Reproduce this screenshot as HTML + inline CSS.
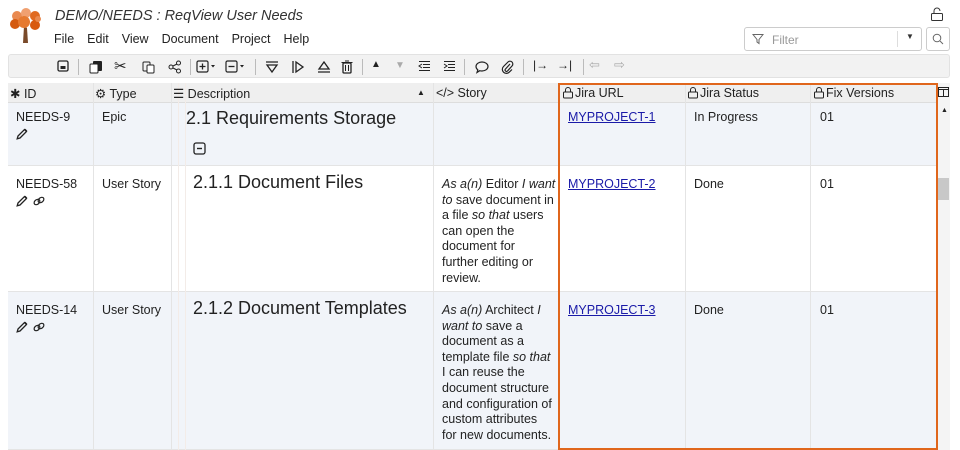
<!DOCTYPE html>
<html><head><meta charset="utf-8"><style>
*{box-sizing:border-box;margin:0;padding:0}
body{width:960px;height:450px;overflow:hidden;background:#fff;font-family:"Liberation Sans",sans-serif;color:#222;position:relative;font-size:12px}
.a{position:absolute}
.menu span{margin-right:13px}
.tb{left:8px;top:54px;width:942px;height:24px;background:#f2f2f2;border:1px solid #e2e2e2;border-radius:3px}
.ic{position:absolute;top:5px}
.sep{position:absolute;top:4px;width:1px;height:16px;background:#bbb}
.hdr{left:8px;top:83px;width:942px;height:20px;background:#efefef;border-bottom:1px solid #ddd}
.hc{position:absolute;top:86px;font-size:12.5px;color:#222}
.row{position:absolute;left:8px;width:929px;border-bottom:1px solid #e4e4e4}
.vl{position:absolute;top:83px;width:1px;height:367px;background:#e4e4e4}
.t{position:absolute;font-size:12.5px;line-height:15.6px}
.h{position:absolute;font-size:18px;color:#222}
a{color:#1a1aa8;text-decoration:underline}
i{font-style:italic}
</style></head><body>
<svg width="0" height="0" style="position:absolute"><defs>
<symbol id="pen" viewBox="0 0 12 12"><path d="M8.5 1.5l2 2L4 10l-2.8.8L2 8Z" fill="none" stroke="#222" stroke-width="1.3"/><path d="M8.5 1.5l2 2 .8-.8-2-2Z" fill="#222"/></symbol>
<symbol id="lnk" viewBox="0 0 14 12"><ellipse cx="5" cy="7" rx="3.2" ry="2.3" transform="rotate(-40 5 7)" fill="none" stroke="#222" stroke-width="1.2"/><ellipse cx="9" cy="5" rx="3.2" ry="2.3" transform="rotate(-40 9 5)" fill="none" stroke="#222" stroke-width="1.2"/></symbol>
</defs></svg>
<svg class="a" style="left:8px;top:6px" width="36" height="38" viewBox="0 0 36 38">
<path d="M16 20 L15 37 L20 37 L19 22 Z" fill="#7a4a2a"/>
<circle cx="9" cy="10" r="5" fill="#e98a50"/><circle cx="18" cy="7" r="5" fill="#f0a070"/><circle cx="27" cy="10" r="5" fill="#e06a20"/>
<circle cx="7" cy="18" r="5" fill="#d45a10"/><circle cx="16" cy="16" r="6" fill="#e67a30"/><circle cx="27" cy="19" r="5" fill="#d85a10"/><circle cx="30" cy="13" r="3" fill="#e98a50"/>
</svg>
<div class="a" style="left:55px;top:8px;font-size:14.5px;font-style:italic;color:#333">DEMO/NEEDS : ReqView User Needs</div>
<div class="a menu" style="left:54px;top:32px;font-size:12.5px"><span>File</span><span>Edit</span><span>View</span><span>Document</span><span>Project</span><span>Help</span></div>
<svg class="a" style="left:929px;top:6px" width="16" height="16" viewBox="0 0 16 16"><rect x="2.5" y="7.5" width="11" height="7" rx="1" fill="none" stroke="#333"/><path d="M5 7.5V5a3 3 0 0 1 6 0" fill="none" stroke="#333"/></svg>
<div class="a" style="left:744px;top:27px;width:178px;height:24px;border:1px solid #ccc;border-radius:3px"></div>
<svg class="a" style="left:752px;top:33px" width="12" height="12" viewBox="0 0 12 12"><path d="M1 1.5h10L7 6.5v4L5 9V6.5Z" fill="none" stroke="#666"/></svg>
<div class="a" style="left:772px;top:33px;color:#999;font-size:12px">Filter</div>
<div class="a" style="left:897px;top:31px;width:1px;height:16px;background:#ddd"></div>
<div class="a" style="left:906px;top:32px;font-size:8px;color:#333">▼</div>
<div class="a" style="left:926px;top:27px;width:24px;height:24px;border:1px solid #ccc;border-radius:3px"></div>
<svg class="a" style="left:932px;top:33px" width="12" height="12" viewBox="0 0 12 12"><circle cx="5" cy="5" r="3.8" fill="none" stroke="#666"/><path d="M8 8l3 3" stroke="#666"/></svg>
<div class="a tb">
<svg class="ic" style="left:48px" width="12" height="12" viewBox="0 0 12 12"><rect x="1" y="1" width="10" height="10" rx="1.5" fill="none" stroke="#222" stroke-width="1.3"/><rect x="3.5" y="6" width="5" height="3" fill="#222"/></svg>
<div class="sep" style="left:69px"></div>
<svg class="ic" style="left:80px" width="14" height="14" viewBox="0 0 14 14"><rect x="4" y="1" width="9" height="10" rx="1" fill="#222"/><rect x="1" y="4" width="8" height="9" rx="1" fill="#fff" stroke="#222"/></svg>
<div class="ic" style="left:105px;top:2px;font-size:15px">✂</div>
<svg class="ic" style="left:133px" width="13" height="14" viewBox="0 0 13 14"><rect x="1" y="2" width="7" height="9" rx="1" fill="none" stroke="#222"/><rect x="5" y="5" width="7" height="8" rx="1" fill="#fff" stroke="#222"/></svg>
<svg class="ic" style="left:159px" width="14" height="14" viewBox="0 0 14 14"><circle cx="3" cy="7" r="2" fill="none" stroke="#222"/><circle cx="10.5" cy="3" r="2" fill="none" stroke="#222"/><circle cx="10.5" cy="11" r="2" fill="none" stroke="#222"/><path d="M5 6l4-2M5 8l4 2" stroke="#222"/></svg>
<div class="sep" style="left:181px"></div>
<svg class="ic" style="left:187px" width="22" height="13" viewBox="0 0 22 13"><rect x="1" y="1" width="11" height="11" rx="1.5" fill="none" stroke="#222" stroke-width="1.2"/><path d="M6.5 3.5v6M3.5 6.5h6" stroke="#222" stroke-width="1.3"/><path d="M15 5h4l-2 2.5z" fill="#222"/></svg>
<svg class="ic" style="left:216px" width="22" height="13" viewBox="0 0 22 13"><rect x="1" y="1" width="11" height="11" rx="1.5" fill="none" stroke="#222" stroke-width="1.2"/><path d="M3.5 6.5h6" stroke="#222" stroke-width="1.3"/><path d="M15 5h4l-2 2.5z" fill="#222"/></svg>
<div class="sep" style="left:246px"></div>
<svg class="ic" style="left:256px" width="14" height="14" viewBox="0 0 14 14"><path d="M1 2h12M2 5h10L7 12Z" fill="none" stroke="#222" stroke-width="1.3"/></svg>
<svg class="ic" style="left:282px" width="14" height="14" viewBox="0 0 14 14"><path d="M2 1v12M5 2v10l7-5Z" fill="none" stroke="#222" stroke-width="1.3"/></svg>
<svg class="ic" style="left:308px" width="14" height="14" viewBox="0 0 14 14"><path d="M2 9h10L7 2Z M1 12h12" fill="none" stroke="#222" stroke-width="1.3"/></svg>
<svg class="ic" style="left:331px" width="14" height="14" viewBox="0 0 14 14"><rect x="3" y="3" width="8" height="10" rx="1" fill="none" stroke="#222" stroke-width="1.3"/><path d="M1.5 2.5h11M5 1h4M5.5 5v6M8.5 5v6" stroke="#222"/></svg>
<div class="sep" style="left:353px"></div>
<div class="ic" style="left:362px;top:4px;font-size:10px">▲</div>
<div class="ic" style="left:386px;top:5px;font-size:10px;color:#aaa">▼</div>
<svg class="ic" style="left:409px" width="13" height="13" viewBox="0 0 13 13"><path d="M1 1.5h11M5 4.5h7M5 7.5h7M1 10.5h11M4 4l-3 2 3 2" fill="none" stroke="#222"/></svg>
<svg class="ic" style="left:434px" width="13" height="13" viewBox="0 0 13 13"><path d="M1 1.5h11M5 4.5h7M5 7.5h7M1 10.5h11M1 4l3 2-3 2" fill="none" stroke="#222"/></svg>
<div class="sep" style="left:455px"></div>
<svg class="ic" style="left:466px" width="14" height="14" viewBox="0 0 14 14"><path d="M7 2c3.3 0 6 2 6 4.5S10.3 11 7 11c-.8 0-1.6-.1-2.3-.3L2 12.5l.8-2.6C1.7 9 1 7.8 1 6.5 1 4 3.7 2 7 2Z" fill="none" stroke="#222" stroke-width="1.2"/></svg>
<svg class="ic" style="left:492px" width="13" height="14" viewBox="0 0 13 14"><path d="M9 4L4.5 9a1.4 1.4 0 0 0 2 2L11 6a2.8 2.8 0 0 0-4-4L2.5 6.5a4 4 0 0 0 5.7 5.7L11 9.5" fill="none" stroke="#222" stroke-width="1.2"/></svg>
<div class="sep" style="left:514px"></div>
<div class="ic" style="left:524px;top:3px;font-size:12px">|→</div>
<div class="ic" style="left:548px;top:3px;font-size:12px">→|</div>
<div class="sep" style="left:574px"></div>
<div class="ic" style="left:580px;top:2px;font-size:13px;color:#aaa">⇦</div>
<div class="ic" style="left:605px;top:2px;font-size:13px;color:#aaa">⇨</div>
</div>
<div class="a" style="left:8px;top:83px;width:1px;height:367px;background:#ccc"></div>
<div class="a hdr"></div>
<div class="row" style="top:103px;height:63px;background:#f1f4f9"></div>
<div class="row" style="top:166px;height:126px;background:#fff"></div>
<div class="row" style="top:292px;height:158px;background:#f1f4f9"></div>
<div class="vl" style="left:93px"></div><div class="vl" style="left:171px"></div>
<div class="vl" style="left:178px;background:#f3ece8"></div><div class="vl" style="left:185px;background:#f3ece8"></div>
<div class="vl" style="left:433px"></div><div class="vl" style="left:685px"></div><div class="vl" style="left:810px"></div>
<div class="hc" style="left:10px">✱ ID</div>
<div class="hc" style="left:95px">⚙ Type</div>
<div class="hc" style="left:173px">☰ Description</div>
<div class="hc" style="left:417px;font-size:8px;top:88px">▲</div>
<div class="hc" style="left:436px">&lt;/&gt; Story</div>
<svg class="a" style="left:562px;top:86px" width="12" height="13" viewBox="0 0 12 13"><rect x="1.5" y="6" width="9" height="6" rx="1" fill="none" stroke="#222"/><path d="M3.5 6V4a2.5 2.5 0 0 1 5 0v2" fill="none" stroke="#222"/></svg>
<div class="hc" style="left:575px">Jira URL</div>
<svg class="a" style="left:687px;top:86px" width="12" height="13" viewBox="0 0 12 13"><rect x="1.5" y="6" width="9" height="6" rx="1" fill="none" stroke="#222"/><path d="M3.5 6V4a2.5 2.5 0 0 1 5 0v2" fill="none" stroke="#222"/></svg>
<div class="hc" style="left:700px">Jira Status</div>
<svg class="a" style="left:813px;top:86px" width="12" height="13" viewBox="0 0 12 13"><rect x="1.5" y="6" width="9" height="6" rx="1" fill="none" stroke="#222"/><path d="M3.5 6V4a2.5 2.5 0 0 1 5 0v2" fill="none" stroke="#222"/></svg>
<div class="hc" style="left:826px">Fix Versions</div>
<div class="a" style="left:937px;top:83px;width:13px;height:367px;background:#f4f4f4;border-left:1px solid #ddd"></div>
<svg class="a" style="left:938px;top:87px" width="11" height="10" viewBox="0 0 11 10"><rect x="0.5" y="0.5" width="10" height="9" fill="none" stroke="#222"/><path d="M0.5 2.5h10M5.5 2.5v7" stroke="#222"/></svg>
<div class="a" style="left:941px;top:107px;font-size:7px">▲</div>
<div class="a" style="left:938px;top:178px;width:11px;height:22px;background:#c8c8c8"></div>
<div class="t" style="left:16px;top:110px">NEEDS-9</div>
<svg class="a" style="left:16px;top:128px" width="12" height="12"><use href="#pen"/></svg>
<div class="t" style="left:102px;top:110px">Epic</div>
<div class="h" style="left:186px;top:108px">2.1 Requirements Storage</div>
<svg class="a" style="left:193px;top:142px" width="13" height="13" viewBox="0 0 13 13"><rect x="1" y="1" width="11" height="11" rx="2" fill="none" stroke="#222" stroke-width="1.3"/><path d="M4 6.5h5" stroke="#222" stroke-width="1.4"/></svg>
<div class="t" style="left:568px;top:110px"><a>MYPROJECT-1</a></div>
<div class="t" style="left:694px;top:110px">In Progress</div>
<div class="t" style="left:820px;top:110px">01</div>
<div class="t" style="left:16px;top:177px">NEEDS-58</div>
<svg class="a" style="left:16px;top:195px" width="12" height="12"><use href="#pen"/></svg>
<svg class="a" style="left:32px;top:195px" width="14" height="12"><use href="#lnk"/></svg>
<div class="t" style="left:102px;top:177px">User Story</div>
<div class="h" style="left:193px;top:172px">2.1.1 Document Files</div>
<div class="t" style="left:442px;top:177px;width:114px">
<i>As a(n)</i> Editor <i>I want</i><br><i>to</i> save document in<br>a file <i>so that</i> users<br>can open the<br>document for<br>further editing or<br>review.</div>
<div class="t" style="left:568px;top:177px"><a>MYPROJECT-2</a></div>
<div class="t" style="left:694px;top:177px">Done</div>
<div class="t" style="left:820px;top:177px">01</div>
<div class="t" style="left:16px;top:303px">NEEDS-14</div>
<svg class="a" style="left:16px;top:321px" width="12" height="12"><use href="#pen"/></svg>
<svg class="a" style="left:32px;top:321px" width="14" height="12"><use href="#lnk"/></svg>
<div class="t" style="left:102px;top:303px">User Story</div>
<div class="h" style="left:193px;top:298px">2.1.2 Document Templates</div>
<div class="t" style="left:442px;top:303px;width:116px">
<i>As a(n)</i> Architect <i>I</i><br><i>want to</i> save a<br>document as a<br>template file <i>so that</i><br>I can reuse the<br>document structure<br>and configuration of<br>custom attributes<br>for new documents.</div>
<div class="t" style="left:568px;top:303px"><a>MYPROJECT-3</a></div>
<div class="t" style="left:694px;top:303px">Done</div>
<div class="t" style="left:820px;top:303px">01</div>
<div class="a" style="left:558px;top:83px;width:380px;height:367px;border:2px solid #e0661c"></div>
</body></html>
